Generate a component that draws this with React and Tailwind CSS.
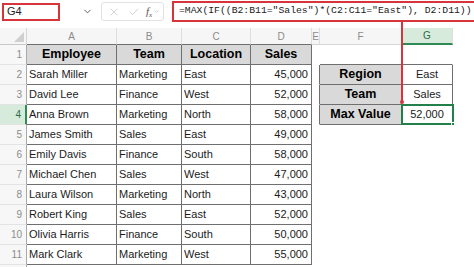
import React from 'react';
import { ChevronDown, X, Check } from 'lucide-react';

const cols = [
  { k: 'A', w: 'w-[90px]' },
  { k: 'B', w: 'w-[65px]' },
  { k: 'C', w: 'w-[69px]' },
  { k: 'D', w: 'w-[61px]' },
  { k: 'E', w: 'w-[8px]' },
  { k: 'F', w: 'w-[82px]' },
  { k: 'G', w: 'w-[51px]' },
];

const data = [
  ['Employee', 'Team', 'Location', 'Sales'],
  ['Sarah Miller', 'Marketing', 'East', '45,000'],
  ['David Lee', 'Finance', 'West', '52,000'],
  ['Anna Brown', 'Marketing', 'North', '58,000'],
  ['James Smith', 'Sales', 'East', '49,000'],
  ['Emily Davis', 'Finance', 'South', '58,000'],
  ['Michael Chen', 'Sales', 'West', '47,000'],
  ['Laura Wilson', 'Marketing', 'North', '43,000'],
  ['Robert King', 'Sales', 'East', '52,000'],
  ['Olivia Harris', 'Finance', 'South', '50,000'],
  ['Mark Clark', 'Marketing', 'West', '55,000'],
];

const lookup = { 2: ['Region', 'East'], 3: ['Team', 'Sales'], 4: ['Max Value', '52,000'] };

// c: 1 = A ... 7 = G
function inTable(r, c) {
  if (r >= 1 && r <= 11 && c >= 1 && c <= 4) return true;
  if (r >= 2 && r <= 4 && (c === 6 || c === 7)) return true;
  return false;
}

function Cell({ r, c, w }) {
  const rd = inTable(r, c) || inTable(r, c + 1);
  const bd = inTable(r, c) || inTable(r + 1, c);
  const grey = (r === 1 && c <= 4) || (lookup[r] && c === 6);
  let content = null;
  let align = 'justify-start pl-[2px]';
  let text = 'text-[11px] text-[#1b1b1b]';
  if (r >= 1 && r <= 11 && c <= 4) {
    content = data[r - 1][c - 1];
    if (r === 1) {
      align = 'justify-center';
      text = 'text-[12.5px] font-bold text-black';
    } else if (c === 4) {
      align = 'justify-end pr-[3px]';
    }
  }
  if (lookup[r] && c === 6) {
    content = lookup[r][0];
    align = 'justify-center';
    text = 'text-[12.5px] font-bold text-black';
  }
  if (lookup[r] && c === 7) {
    content = lookup[r][1];
    align = 'justify-center';
  }
  const sel = r === 4 && c === 7;
  return (
    <div
      className={`${w} h-full shrink-0 flex items-center relative border-r border-b ${align} ${text} ${
        rd ? 'border-r-[#6f6f6f]' : 'border-r-transparent'
      } ${bd ? 'border-b-[#6f6f6f]' : 'border-b-transparent'} ${grey ? 'bg-[#d9d9d9]' : 'bg-white'}`}
    >
      <span className="whitespace-nowrap leading-none">{content}</span>
      {sel && (
        <div className="absolute -left-[1px] -top-[1px] w-[53px] h-[21px] border-2 border-[#23804a]">
          <div className="absolute -right-[3px] -bottom-[3px] w-[4px] h-[4px] bg-[#23804a] border border-white" />
        </div>
      )}
    </div>
  );
}

function Row({ r }) {
  const active = r === 4;
  return (
    <div className="flex h-[20px]">
      <div
        className={`w-[27px] h-full shrink-0 flex items-center justify-end pr-[4px] text-[10px] border-b border-b-[#e3e3e3] ${
          active
            ? 'bg-[#d6ebdc] text-[#2a6b43] border-r-2 border-r-[#2f8a55]'
            : 'bg-[#f7f7f7] text-[#8c8c8c] border-r border-r-[#a9a9a9]'
        }`}
      >
        {r <= 11 ? r : ''}
      </div>
      {cols.map((col, i) => (
        <Cell key={col.k} r={r} c={i + 1} w={col.w} />
      ))}
    </div>
  );
}

export default function App() {
  const rows = Array.from({ length: 12 }, (_, i) => i + 1);
  return (
    <div className="w-[474px] h-[267px] overflow-hidden bg-white relative font-['Liberation_Sans',Arial,sans-serif]">
      {/* formula bar */}
      <div className="flex items-center h-[23px]">
        <div className="ml-[2px] w-[58px] h-[18px] border-2 border-[#d8343c] flex items-center pl-[3px] text-[11px] text-[#222]">
          G4
        </div>
        <ChevronDown className="ml-[22px] w-[11px] h-[11px] text-[#555]" strokeWidth={2} />
        <div className="ml-[8px] w-[63px] h-[19px] rounded-[3px] border border-[#e2e2e2] flex items-center gap-[8px] pl-[6px] text-[#c4c4c4]">
          <X className="w-[12px] h-[12px]" strokeWidth={1.5} />
          <Check className="w-[12px] h-[12px]" strokeWidth={1.5} />
          <span className="font-['Liberation_Serif',serif] italic text-[11px] text-[#555] -ml-[2px]">
            f<sub className="text-[7px]">x</sub>
          </span>
          <ChevronDown className="-ml-[7px] w-[7px] h-[7px] text-[#aaa]" />
        </div>
        <div className="ml-[8px] flex-1 h-[21px] border-2 border-r-0 border-[#d8343c] flex items-center pl-[5px] font-['Liberation_Mono',monospace] text-[9.75px] text-[#222] whitespace-nowrap overflow-hidden">
          =MAX(IF((B2:B11="Sales")*(C2:C11="East"), D2:D11))
        </div>
      </div>

      {/* column headers */}
      <div className="flex h-[17px] mt-[5px]">
        <div className="w-[27px] h-full shrink-0 bg-[#f6f6f6] border-r border-r-[#d6d6d6] border-b border-b-[#c9c9c9] relative">
          <svg className="absolute right-[2px] bottom-[2px]" width="10" height="10" viewBox="0 0 10 10">
            <polygon points="10,0 10,10 0,10" fill="#cfcfcf" />
          </svg>
        </div>
        {cols.map((col, i) => {
          const g = col.k === 'G';
          const dark = inTable(1, i + 1);
          return (
            <div
              key={col.k}
              className={`${col.w} h-full shrink-0 flex items-center justify-center text-[10px] border-r border-r-[#dedede] ${
                g
                  ? 'bg-[#d6ebdc] text-[#2a6b43] border-b-2 border-b-[#2f8a55]'
                  : `bg-[#f6f6f6] text-[#8c8c8c] border-b ${dark ? 'border-b-[#6f6f6f]' : 'border-b-[#d6d6d6]'}`
              }`}
            >
              {col.k}
            </div>
          );
        })}
      </div>

      {rows.map((r) => (
        <Row key={r} r={r} />
      ))}

      {/* red arrow */}
      <div className="absolute left-[401px] top-[22px] w-[2px] h-[80px] bg-[#d8343c]" />
      <div className="absolute left-[400px] top-[100px] w-[4px] h-[4px] rounded-full bg-[#d8343c]" />
    </div>
  );
}
